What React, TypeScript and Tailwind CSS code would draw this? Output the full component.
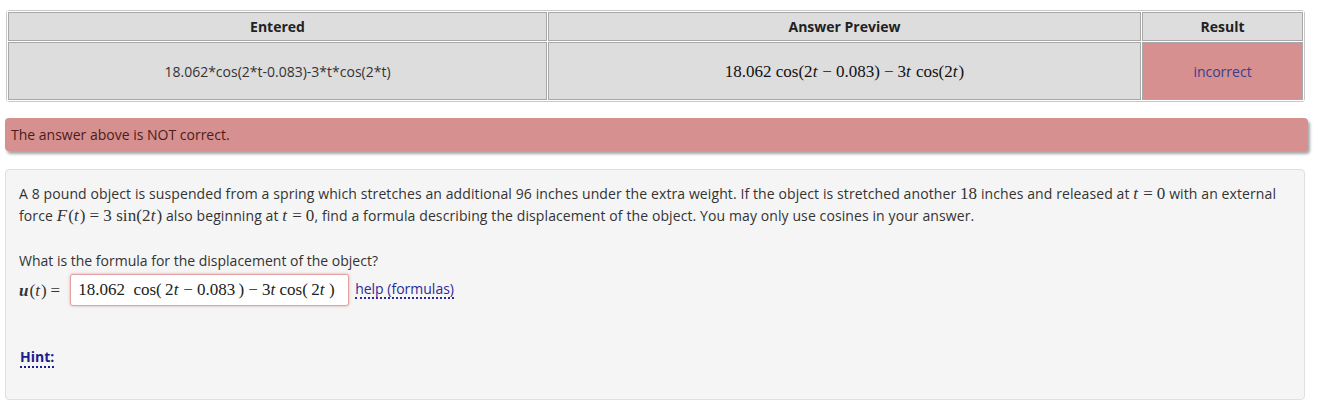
import React from "react";

function M({ children }: { children: React.ReactNode }) {
  return (
    <span className="font-['Liberation_Serif',serif] text-[17px] leading-[1]">{children}</span>
  );
}

function I({ children }: { children: React.ReactNode }) {
  return <i className="font-['Liberation_Serif',serif] pr-[1px]">{children}</i>;
}

// binary operator with math-style spacing
function Op({ children }: { children: React.ReactNode }) {
  return <span className="mx-[4px]">{children}</span>;
}

export default function App() {
  return (
    <div className="w-[1321px] h-[413px] bg-white pt-[10px] text-[14px] text-[#333] font-['Open_Sans',sans-serif]">
      {/* Results table */}
      <div className="ml-[6px] w-[1299px] rounded-[3px] border border-[#c8c8c8]">
        <table className="w-full border-separate border-spacing-[1px] bg-white">
          <thead>
            <tr className="h-[29px]">
              <th className="w-[539px] border border-[#a8a8a8] bg-[#dddddd] font-bold text-[#222]">Entered</th>
              <th className="w-[593px] border border-[#a8a8a8] bg-[#dddddd] font-bold text-[#222]">Answer Preview</th>
              <th className="border border-[#a8a8a8] bg-[#dddddd] font-bold text-[#222]">Result</th>
            </tr>
          </thead>
          <tbody>
            <tr className="h-[58px]">
              <td className="border border-[#a8a8a8] bg-[#dddddd] text-center">18.062*cos(2*t-0.083)-3*t*cos(2*t)</td>
              <td className="border border-[#a8a8a8] bg-[#dddddd] text-center text-[#111]">
                <M>
                  18.062 cos(2<I>t</I><Op>−</Op>0.083)<Op>−</Op>3<I>t</I> cos(2<I>t</I>)
                </M>
              </td>
              <td className="border border-[#a8a8a8] bg-[#d69090] text-center text-[#3b3b8f]">incorrect</td>
            </tr>
          </tbody>
        </table>
      </div>

      {/* Alert */}
      <div className="mt-[16px] ml-[5px] w-[1303px] h-[33px] flex items-center rounded-[4px] bg-[#d69090] px-[6px] text-[#4a1c1c] shadow-[2px_3px_3px_rgba(0,0,0,0.35)]">
        The answer above is NOT correct.
      </div>

      {/* Problem */}
      <div className="mt-[18px] ml-[5px] w-[1300px] h-[231px] rounded-[4px] border border-[#e0e0e0] bg-[#f5f5f5] px-[13px] pt-[13px] text-[#333]">
        <p className="leading-[22px] tracking-[0.1px]">
          A 8 pound object is suspended from a spring which stretches an additional 96 inches under the extra weight. If the object is stretched another <M>18</M> inches and released at <M><I>t</I><Op>=</Op>0</M> with an external{" "}
          <span>force</span> <M><I>F</I>(<I>t</I>)<Op>=</Op>3 sin(2<I>t</I>)</M> also beginning at <M><I>t</I><Op>=</Op>0</M>, find a formula describing the displacement of the object. You may only use cosines in your answer.
        </p>
        <p className="mt-[23px] leading-[22px]">What is the formula for the displacement of the object?</p>
        <div className="mt-[2px] flex items-center">
          <span className="mr-[5px]">
            <M>
              <b><I>u</I></b>(<I>t</I>)<Op>=</Op>
            </M>
          </span>
          <div className="ml-[1px] flex h-[32px] w-[279px] items-center whitespace-nowrap rounded-[3px] border border-[#e3a0a0] bg-white px-[7px] shadow-[0_0_3px_rgba(200,80,80,0.45)] text-[17px] text-[#222] font-['Liberation_Serif',serif]">
            18.062&nbsp;&nbsp;cos(&thinsp;2<I>t</I><Op>−</Op>0.083&thinsp;)<Op>−</Op>3<I>t</I>&thinsp;cos(&thinsp;2<I>t</I>&thinsp;)
          </div>
          <a className="ml-[6px] text-[#2a2a9c] border-b-2 border-dotted border-[#2a2a9c] leading-[16px]">help (formulas)</a>
        </div>
        <div className="mt-[40px] ml-[1px]">
          <a className="font-bold text-[#1c1c8a] border-b-2 border-dotted border-[#1c1c8a] leading-[16px]">Hint:</a>
        </div>
      </div>
    </div>
  );
}
